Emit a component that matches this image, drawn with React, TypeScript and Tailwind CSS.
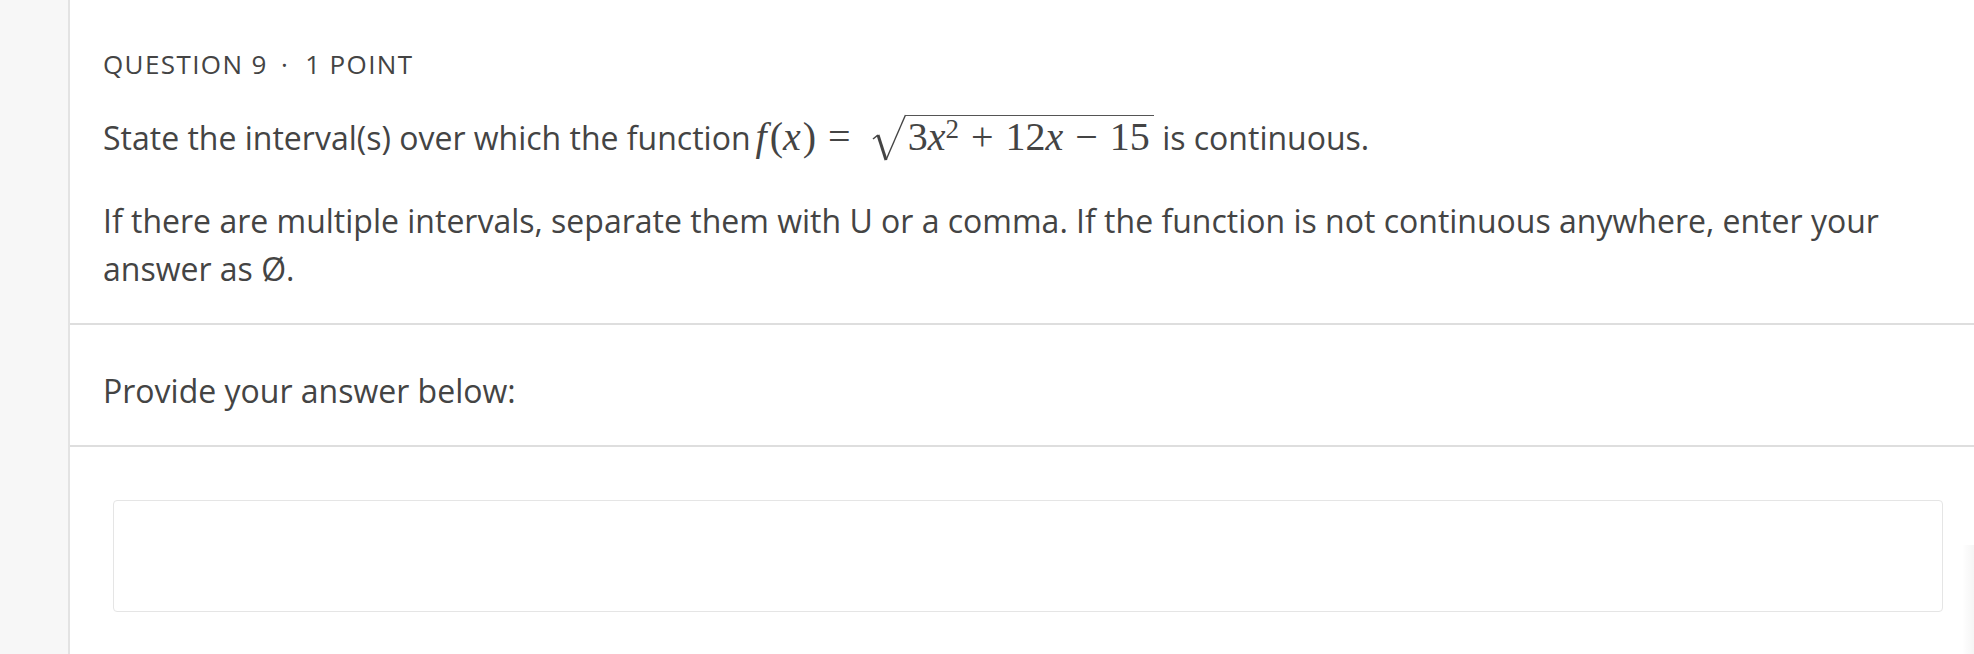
export default function App() {
  return (
    <div
      className="flex min-h-screen w-full bg-white text-[#444]"
      style={{ fontFamily: '"Open Sans", "Noto Sans", sans-serif' }}
    >
      {/* left rail */}
      <div className="w-[70px] shrink-0 border-r-2 border-[#e3e3e3] bg-[#f7f7f7]" />

      <div className="relative flex-1">
        {/* question */}
        <section className="border-b-2 border-[#dedede] pb-[30px] pl-[33px] pr-[31px] pt-[48px]">
          <div className="text-[26px] font-medium uppercase leading-[32px] tracking-[1.4px]">
            Question 9<span className="ml-[13px] mr-[16px]">·</span>1 Point
          </div>

          <p className="mt-[34px] text-[32px] leading-[48px]">
            State the interval(s) over which the function
            <span className="ml-[5px] text-[40px] leading-none" style={{ fontFamily: '"Liberation Serif", serif' }}>
              <i>f</i>
              <span className="ml-[3px]">(</span>
              <i>x</i>
              <span className="ml-[2px]">)</span>
              <span className="ml-[12px] mr-[21px]">=</span>
              <svg
                width="34"
                height="48"
                viewBox="0 0 34 48"
                className="inline-block align-[-12px]"
                fill="none"
                stroke="#444"
                strokeLinejoin="round"
              >
                <path d="M1 25 L6 21" strokeWidth="1.6" />
                <path d="M6 21 L14 46" strokeWidth="3" />
                <path d="M14 46 L33.5 1" strokeWidth="1.4" />
              </svg>
              <span className="inline-block border-t-[1.5px] border-[#555] pl-[2px] pr-[4px] leading-[42px]">
                3<i>x</i>
                <sup className="top-[-0.45em] text-[27px]">2</sup>
                <span className="mx-[12px]">+</span>12<i>x</i>
                <span className="mx-[12px]">−</span>15
              </span>
            </span>{' '}
            is continuous.
          </p>

          <p className="mt-[35px] text-[32px] leading-[48px]">
            If there are multiple intervals, separate them with U or a comma. If the function is not continuous
            anywhere, enter your answer as Ø.
          </p>
        </section>

        {/* prompt */}
        <section className="border-b-2 border-[#dedede] pb-[30px] pl-[33px] pt-[42px]">
          <p className="text-[32px] leading-[48px]">Provide your answer below:</p>
        </section>

        {/* answer box */}
        <div className="pl-[43px] pr-[31px] pt-[53px]">
          <div className="h-[112px] rounded-[4px] border-[1.5px] border-[#e5e5e5] bg-white" />
        </div>

        <div className="pointer-events-none absolute bottom-0 right-0 top-[545px] w-[12px] bg-gradient-to-l from-black/[0.04] to-transparent" />
      </div>
    </div>
  );
}
